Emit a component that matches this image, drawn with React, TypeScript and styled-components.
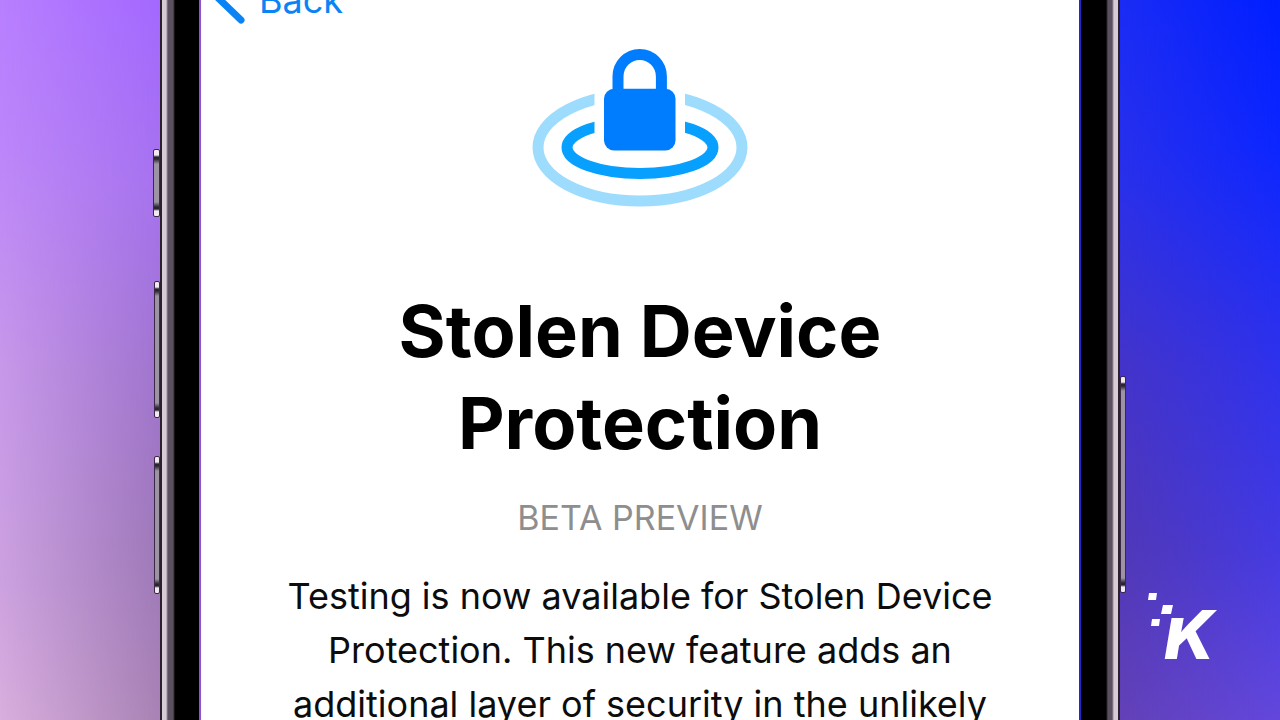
import React from "react";
import styled, { createGlobalStyle } from "styled-components";

const GlobalStyle = createGlobalStyle`
  * { box-sizing: border-box; }
  body { margin: 0; font-family: Inter, "Liberation Sans", sans-serif; }
`;

const Stage = styled.div`
  position: relative;
  display: grid;
  grid-template-columns: 1fr 6fr 1fr;
  height: 100vh;
  overflow: hidden;
`;

const Backdrop = styled.div<{ $near: string; $far: string; $align: string }>`
  position: relative;
  display: flex;
  flex-direction: column;
  align-items: ${(p) => p.$align};
  background: linear-gradient(${(p) => p.$near});

  &::before {
    content: "";
    position: absolute;
    inset: 0;
    background: linear-gradient(${(p) => p.$far});
    mask-image: linear-gradient(to right, transparent, #000);
  }
`;

const SideButton = styled.span<{ $top: number; $length: number; $width: number }>`
  position: relative;
  flex: none;
  width: ${(p) => p.$width}px;
  height: ${(p) => p.$length}px;
  margin-top: ${(p) => p.$top}px;
  border: 1px solid #3a2a48;
  border-radius: 2px;
  background: linear-gradient(#f0eaf0 0 5px, #2a2630 7px 9px, #9c94a2 14px calc(100% - 14px), #2a2630 calc(100% - 9px) calc(100% - 7px), #f0eaf0 calc(100% - 5px));
`;

const Phone = styled.main`
  display: flex;
  border: solid #2b2030;
  border-width: 0 2px;
  background: linear-gradient(to right, #d8ccd6 0 4px, #5a505e 6px 11px, #000 13px calc(100% - 12px), #5a505e calc(100% - 10px) calc(100% - 6px), #d8ccd6 calc(100% - 4px));
  padding: 0 37px;
  min-width: 0;
`;

const Screen = styled.section`
  flex: 1;
  min-width: 0;
  display: flex;
  flex-direction: column;
  align-items: center;
  background: #fff;
  border-left: 2px solid #9350d8;
  border-right: 2px solid #2a25c8;
  text-align: center;
`;

const NavBar = styled.nav`
  align-self: stretch;
  display: flex;
  height: 24px;
  padding-left: 8px;
  align-items: flex-end;
`;

const BackButton = styled.button`
  display: flex;
  align-items: flex-end;
  gap: 14px;
  border: 0;
  padding: 0;
  background: none;
  color: #0a84f5;
  font: 400 36px/48px Inter, "Liberation Sans", sans-serif;
`;

const LockArt = styled.svg`
  flex: none;
  display: block;
  margin-top: 16px;
`;

const Title = styled.h1`
  margin: 75px 0 0;
  max-width: 600px;
  font-size: 72px;
  line-height: 92px;
  font-weight: 700;
  color: #000;
`;

const Tag = styled.p`
  margin: 25px 0 0;
  font-size: 34px;
  line-height: 48px;
  color: #8e8e8e;
`;

const Body = styled.p`
  margin: 27px 0 0;
  max-width: 740px;
  font-size: 36px;
  line-height: 54px;
  color: #0c0c0c;
`;

const Watermark = styled.svg`
  position: absolute;
  right: 60px;
  bottom: 56px;
  overflow: visible;
`;

export default function App() {
  return (
    <>
      <GlobalStyle />
      <Stage>
        <Backdrop
          $align="flex-end"
          $near="#b87fff 0%, #bd86fa 20%, #c798ea 50%, #cda2e0 80%, #dab0de 100%"
          $far="#a368ff 0%, #a672ee 25%, #a074ce 50%, #9d78b8 75%, #a983b4 100%"
        >
          <SideButton $top={149} $length={68} $width={7} />
          <SideButton $top={64} $length={137} $width={6} />
          <SideButton $top={38} $length={138} $width={6} />
        </Backdrop>
        <Phone>
          <Screen>
            <NavBar>
              <BackButton type="button">
                <svg width="36" height="48" viewBox="0 0 36 48" fill="none" aria-hidden="true">
                  <path d="M32 -4L7 20L32 44" stroke="#0a84f5" strokeWidth="7" strokeLinecap="round" strokeLinejoin="round" />
                </svg>
                Back
              </BackButton>
            </NavBar>
            <LockArt width="220" height="170" viewBox="530 40 220 170" fill="none" aria-hidden="true">
              <ellipse cx="640" cy="147.5" rx="102" ry="53.5" stroke="#9edcfd" strokeWidth="11" />
              <ellipse cx="640" cy="147.5" rx="73" ry="26" stroke="#08a0ff" strokeWidth="11" />
              <path d="M594.5 80H685V145H594.5Z" fill="#fff" />
              <path d="M618 94V76.5a21.7 22 0 0 1 43.4 0V94" stroke="#007dff" strokeWidth="11" />
              <rect x="604" y="88.8" width="71.5" height="61.7" rx="10" fill="#007dff" />
            </LockArt>
            <Title>Stolen Device Protection</Title>
            <Tag>BETA PREVIEW</Tag>
            <Body>
              Testing is now available for Stolen Device Protection. This new feature adds an additional layer of
              security in the unlikely
            </Body>
          </Screen>
        </Phone>
        <Backdrop
          $align="flex-start"
          $near="#1a2cf6 0%, #2a30ea 25%, #4434ca 50%, #5038b8 75%, #6442b8 100%"
          $far="#001eff 0%, #0c26ff 20%, #2a30ee 45%, #443ae2 75%, #6548dc 100%"
        >
          <SideButton $top={376} $length={217} $width={6} />
        </Backdrop>
        <Watermark width="76" height="76" viewBox="0 0 76 76" fill="#fff" role="img" aria-label="K">
          <clipPath id="short-stem">
            <path d="M0 30H41V0H76V76H0Z" />
          </clipPath>
          <path d="M5 5h8l-1 7h-8zM19 17h10l-2 9h-10zM8 31h8l-1 7h-8z" />
          <text x="20" y="71" fontSize="68" fontWeight="800" fontStyle="italic" clipPath="url(#short-stem)">
            K
          </text>
        </Watermark>
      </Stage>
    </>
  );
}
